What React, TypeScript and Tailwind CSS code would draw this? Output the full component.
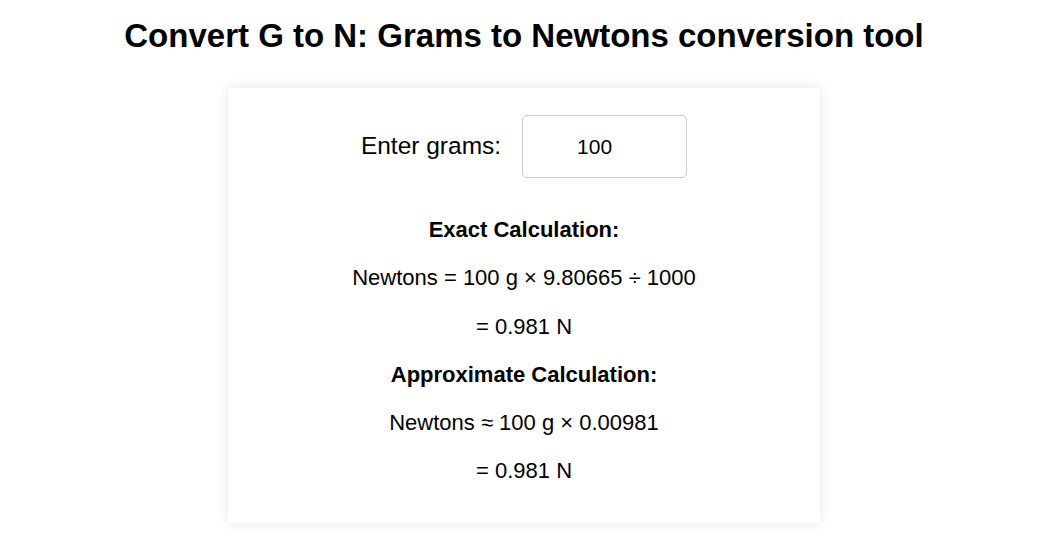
import { useState } from "react";

const App = () => {
  const [grams, setGrams] = useState("100");
  const g = parseFloat(grams) || 0;
  const exact = ((g * 9.80665) / 1000).toFixed(3);
  const approx = (g * 0.00981).toFixed(3);

  return (
    <div className="min-h-[550px] bg-white pr-[2px] font-['Liberation_Sans',Arial,sans-serif] text-black">
      <h1 className="pt-[14px] text-center text-[33px] font-bold leading-[44px]">
        Convert G to N: Grams to Newtons conversion tool
      </h1>

      <div className="mx-auto mt-[30px] w-[592px] bg-white px-[27px] pt-[27px] pb-[27px] text-center shadow-[0_0_12px_rgba(0,0,0,0.1)]">
        <div className="flex items-center justify-center gap-[21px]">
          <label className="text-[24.5px]">Enter grams:</label>
          <input
            value={grams}
            onChange={(e) => setGrams(e.target.value)}
            className="h-[63px] w-[165px] rounded-[5px] border border-[#cccccc] pr-[20px] text-center text-[21px] outline-none"
          />
        </div>

        <div className="mt-[28px] text-[22px] leading-[48.3px]">
          <p className="font-bold">Exact Calculation:</p>
          <p>Newtons = {grams} g × 9.80665 ÷ 1000</p>
          <p>= {exact} N</p>
          <p className="font-bold">Approximate Calculation:</p>
          <p>Newtons ≈ {grams} g × 0.00981</p>
          <p>= {approx} N</p>
        </div>
      </div>
    </div>
  );
};

export default App;
